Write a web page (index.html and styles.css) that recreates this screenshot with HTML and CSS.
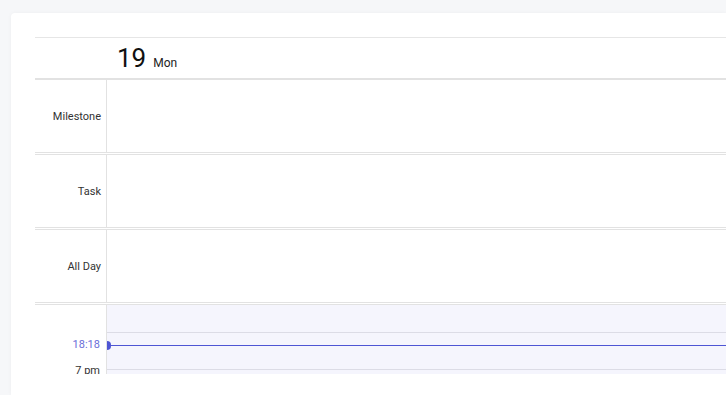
FILE: index.html
```html
<!DOCTYPE html>
<html lang="en">
<head>
    <meta charset="UTF-8">
    <meta name="viewport" content="width=device-width, initial-scale=1.0">
    <title>Day View</title>
    <link rel="stylesheet" href="styles.css">
</head>
<body>
    <div class="card">
        <div class="day-header">
            <div class="gutter"></div>
            <div class="date-cell">
                <span class="date-num">19</span>
                <span class="date-day">Mon</span>
            </div>
        </div>

        <div class="row">
            <div class="gutter row-label">Milestone</div>
            <div class="row-body"></div>
        </div>
        <div class="row">
            <div class="gutter row-label">Task</div>
            <div class="row-body"></div>
        </div>
        <div class="row">
            <div class="gutter row-label">All Day</div>
            <div class="row-body"></div>
        </div>

        <div class="time-scroll">
            <div class="gutter time-gutter">
                <div class="slot slot-first"></div>
                <div class="slot"></div>
                <div class="slot"><span class="hour-label">7 pm</span></div>
                <span class="now-label">18:18</span>
            </div>
            <div class="time-cols">
                <div class="slot slot-first"></div>
                <div class="slot"></div>
                <div class="slot"></div>
                <div class="now-line"><span class="now-dot"></span></div>
            </div>
        </div>
    </div>
</body>
</html>
```

FILE: styles.css
```css
body {
    margin: 0;
    padding: 13px 0 0 11px;
    background-color: #f6f7f9;
    font-family: Roboto, "Liberation Sans", sans-serif;
    color: #333;
    overflow: hidden;
    height: 395px;
    box-sizing: border-box;
}
.card {
    background-color: #fff;
    border-radius: 4px 0 0 0;
    box-shadow: 0 0 4px rgba(0, 0, 0, 0.04);
    padding: 24px 0 0 24px;
    height: 358px;
}
.gutter {
    width: 71px;
    flex-shrink: 0;
    border-right: 1px solid #e2e2e2;
}
.day-header {
    display: flex;
    height: 40px;
    border-top: 1px solid #e6e6e6;
    border-bottom: 2px solid #e2e2e2;
}
.day-header .gutter {
    border-right: none;
    width: 72px;
}
.date-cell {
    display: flex;
    align-items: baseline;
    padding: 5px 0 0 10px;
    color: #111;
}
.date-num {
    font-size: 26px;
    line-height: 30px;
}
.date-day {
    font-size: 12px;
    margin-left: 7px;
    color: #222;
}
.row {
    display: flex;
    height: 72px;
    border-bottom: 3px double #e2e2e2;
}
.row-label {
    display: flex;
    align-items: center;
    justify-content: flex-end;
    padding-right: 5px;
    width: 66px;
    font-size: 11px;
    box-sizing: content-box;
}
.row-body {
    flex: 1;
}
.time-scroll {
    display: flex;
    height: 69px;
    overflow: hidden;
    position: relative;
}
.time-gutter {
    position: relative;
}
.time-cols {
    flex: 1;
    background-color: #f5f5fd;
    position: relative;
}
.slot {
    height: 36px;
    position: relative;
}
.time-cols .slot {
    border-bottom: 1px solid #dcdce6;
}
.time-gutter .slot {
    border-bottom: 1px solid transparent;
}
.slot-first {
    height: 27px;
}
.hour-label {
    position: absolute;
    right: 6px;
    top: -6px;
    font-size: 11px;
    color: #333;
}
.now-label {
    position: absolute;
    right: 6px;
    top: 33px;
    font-size: 11px;
    color: #6a6ed8;
}
.now-line {
    position: absolute;
    left: 0;
    right: 0;
    top: 40px;
    height: 1px;
    background-color: #4e55d4;
}
.now-dot {
    position: absolute;
    left: 0;
    top: -4px;
    width: 4px;
    height: 9px;
    border-radius: 0 5px 5px 0;
    background-color: #4e55d4;
}
```
